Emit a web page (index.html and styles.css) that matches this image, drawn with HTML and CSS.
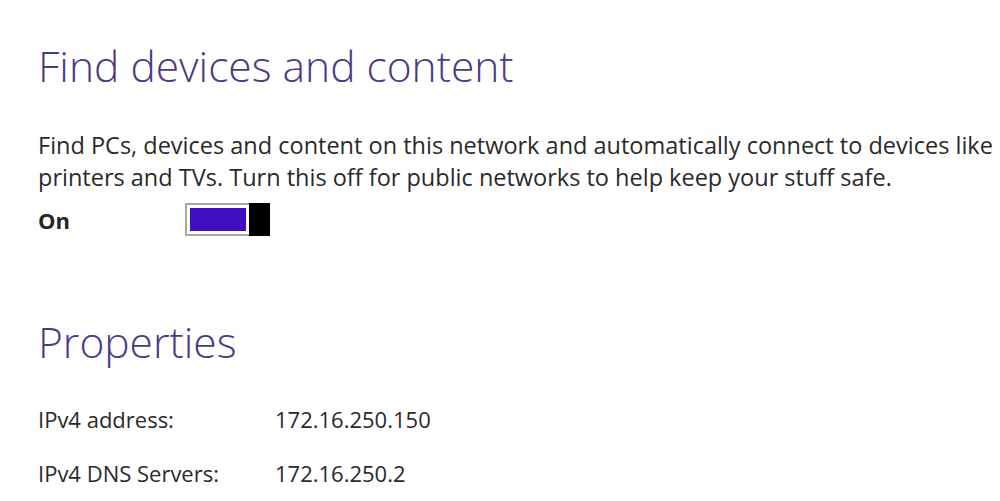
FILE: index.html
```html
<!DOCTYPE html>
<html>
<head>
<meta charset="utf-8">
<link rel="stylesheet" href="styles.css">
</head>
<body>
<main class="page">
  <section class="section">
    <h1 class="title">Find devices and content</h1>
    <p class="desc">Find PCs, devices and content on this network and automatically connect to devices like printers and TVs. Turn this off for public networks to help keep your stuff safe.</p>
    <div class="toggle-row">
      <span class="toggle-label">On</span>
      <span class="toggle"><span class="toggle-fill"></span><span class="toggle-thumb"></span></span>
    </div>
  </section>
  <section class="section props">
    <h1 class="title">Properties</h1>
    <div class="prop"><span class="prop-key">IPv4 address:</span><span class="prop-val">172.16.250.150</span></div>
    <div class="prop"><span class="prop-key">IPv4 DNS Servers:</span><span class="prop-val">172.16.250.2</span></div>
  </section>
</main>
</body>
</html>
```

FILE: styles.css
```css
html, body {
  margin: 0;
  background: #ffffff;
}
.page {
  padding: 38px 0 0 38px;
  font-family: "Open Sans", "Noto Sans", sans-serif;
  color: #262626;
}
.title {
  margin: 0;
  font-size: 42.5px;
  font-weight: 300;
  color: #4b3a86;
  line-height: 56px;
}
.desc {
  margin: 35px 0 0 0;
  font-size: 23.5px;
  line-height: 32px;
  color: #2a2a2a;
  width: 962px;
}
.toggle-row {
  display: flex;
  align-items: center;
  margin-top: 10px;
  height: 33px;
}
.toggle-label {
  font-size: 22px;
  font-weight: 700;
  width: 147px;
}
.toggle {
  display: flex;
  width: 85px;
  height: 33px;
  box-sizing: border-box;
}
.toggle-fill {
  flex: 1;
  border: 2px solid #a7a7a7;
  border-right: none;
  box-shadow: inset 0 0 0 3px #ffffff;
  background: #3d0fbf;
}
.toggle-thumb {
  width: 21px;
  background: #000000;
}
.props {
  margin-top: 78px;
}
.props .title {
  margin-bottom: 22px;
}
.prop {
  display: flex;
  font-size: 22px;
  line-height: 54px;
  color: #2a2a2a;
}
.prop-key {
  width: 237px;
}
```
